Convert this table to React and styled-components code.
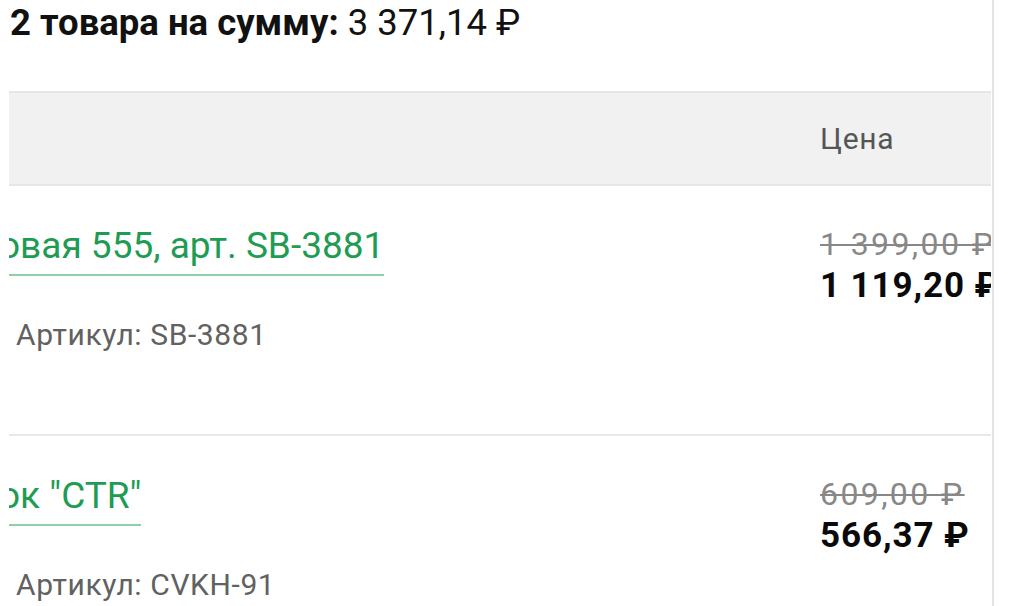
import React, { useLayoutEffect, useRef } from "react";
import styled, { createGlobalStyle } from "styled-components";

const Global = createGlobalStyle`
  html, body { margin: 0; padding: 0; background: #fff; }
  body { font-family: Roboto, "Noto Sans", Arial, sans-serif; color: #000; }
`;

const Page = styled.div`
  box-sizing: border-box;
  width: 994px;
  min-height: 100vh;
  border-right: 2px solid #e4e4e4;
  overflow: hidden;
`;

const Title = styled.h1`
  margin: 0;
  padding: 0 0 0 10px;
  font-size: 36.5px;
  line-height: 46px;
  letter-spacing: 0;
  color: #111;
  b { font-weight: 700; }
  span { font-weight: 400; }
`;

const Scroller = styled.div`
  margin: 45px 1px 0 9px;
  overflow-x: auto;
  scrollbar-width: none;
  &::-webkit-scrollbar { display: none; }
`;

const Table = styled.div`
  display: grid;
  grid-template-columns: 840px 240px;
  width: max-content;
`;

const HeadCell = styled.div`
  box-sizing: border-box;
  height: 95px;
  background: #f1f1f1;
  border-top: 2px solid #e6e6e6;
  border-bottom: 2px solid #e6e6e6;
  display: flex;
  align-items: center;
  padding-left: ${(p) => p.$pad || 0}px;
  font-size: 30px;
  letter-spacing: 0.7px;
  color: #555;
`;

const Cell = styled.div`
  box-sizing: border-box;
  min-height: ${(p) => (p.$last ? 200 : 250)}px;
  border-bottom: ${(p) => (p.$last ? "none" : "2px solid #e8e8e8")};
  padding: ${(p) => p.$pt}px 0 0 ${(p) => p.$pl}px;
`;

const NameLink = styled.a`
  display: inline-block;
  font-size: 37px;
  line-height: 44px;
  color: #1e9c53;
  text-decoration: none;
  border-bottom: 2px solid #8fd0a9;
  padding-bottom: 6px;
  white-space: nowrap;
`;

const Sku = styled.div`
  margin: 42px 0 0 17px;
  font-size: 30px;
  line-height: 34px;
  letter-spacing: 0.6px;
  color: #616161;
`;

const OldPrice = styled.div`
  font-size: 32px;
  line-height: 40px;
  letter-spacing: 2.4px;
  color: #888;
  text-decoration: line-through;
  text-decoration-thickness: 2px;
  white-space: nowrap;
`;

const NewPrice = styled.div`
  font-size: 35px;
  line-height: 44px;
  letter-spacing: 0.9px;
  font-weight: 700;
  color: #0a0a0a;
  white-space: nowrap;
`;

const items = [
  { name: "овая 555, арт. SB-3881", sku: "SB-3881", old: "1 399,00 ₽", price: "1 119,20 ₽" },
  { name: "ок \"CTR\"", sku: "CVKH-91", old: "609,00 ₽", price: "566,37 ₽" },
];

export default function App() {
  const ref = useRef(null);
  useLayoutEffect(() => {
    if (ref.current) ref.current.scrollLeft = 30;
  }, []);
  return (
    <>
      <Global />
      <Page>
        <Title>
          <b>2 товара на сумму:</b> <span>3 371,14 ₽</span>
        </Title>
        <Scroller ref={ref}>
          <Table>
            <HeadCell />
            <HeadCell $pad={1}>Цена</HeadCell>
            {items.map((it, i) => {
              const last = i === items.length - 1;
              return (
                <React.Fragment key={it.sku}>
                  <Cell $pl={20} $pt={38} $last={last}>
                    <NameLink href="#">{it.name}</NameLink>
                    <Sku>Артикул: {it.sku}</Sku>
                  </Cell>
                  <Cell $pl={1} $pt={38} $last={last}>
                    <OldPrice>{it.old}</OldPrice>
                    <NewPrice>{it.price}</NewPrice>
                  </Cell>
                </React.Fragment>
              );
            })}
          </Table>
        </Scroller>
      </Page>
    </>
  );
}
